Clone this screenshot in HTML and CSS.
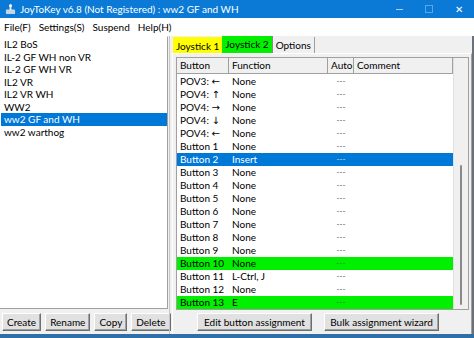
FILE: index.html
```html
<!DOCTYPE html>
<html lang="en">
<head>
  <meta charset="UTF-8" />
  <title>JoyToKey</title>
  <link rel="stylesheet" href="styles.css">
</head>
<body>
  <div class="window">
    <div class="titlebar">
      <svg class="appicon" width="11" height="11" viewBox="0 0 12 12">
        <rect x="1" y="6" width="10" height="5" rx="1" fill="#c8d4e0"/>
        <rect x="5" y="1" width="2" height="6" fill="#e8eef4"/>
        <circle cx="6" cy="2" r="1.6" fill="#fff"/>
      </svg>
      <span class="title">JoyToKey v6.8 (Not Registered) : ww2 GF and WH</span>
      <div class="controls">
        <span class="ctl"><i class="minbar"></i></span>
        <span class="ctl"><i class="maxbox"></i></span>
        <span class="ctl close">&#10005;</span>
      </div>
    </div>
    <div class="menubar">
      <span>File(F)</span>
      <span>Settings(S)</span>
      <span>Suspend</span>
      <span>Help(H)</span>
    </div>
    <div class="main">
      <div class="left">
        <ul class="profiles">
          <li>IL2 BoS</li>
          <li>IL-2 GF WH non VR</li>
          <li>IL-2 GF WH VR</li>
          <li>IL2 VR</li>
          <li>IL2 VR WH</li>
          <li>WW2</li>
          <li class="sel">ww2 GF and WH</li>
          <li>ww2 warthog</li>
        </ul>
        <div class="btnrow">
          <button>Create</button>
          <button>Rename</button>
          <button>Copy</button>
          <button>Delete</button>
        </div>
      </div>
      <div class="right">
        <div class="tabs">
          <span class="tab yellow">Joystick 1</span>
          <span class="tab green">Joystick 2</span>
          <span class="tab active">Options</span>
        </div>
        <div class="panel">
          <div class="listbox">
            <div class="listcol">
              <div class="row head">
                <span>Button</span><span>Function</span><span>Auto</span><span>Comment</span>
              </div>
              <div class="rows">
                <div class="row"><span>POV3: <b class="arr">&#8592;</b></span><span>None</span><span class="dash">---</span><span></span></div>
                <div class="row"><span>POV4: <b class="arr">&#8593;</b></span><span>None</span><span class="dash">---</span><span></span></div>
                <div class="row"><span>POV4: <b class="arr">&#8594;</b></span><span>None</span><span class="dash">---</span><span></span></div>
                <div class="row"><span>POV4: <b class="arr">&#8595;</b></span><span>None</span><span class="dash">---</span><span></span></div>
                <div class="row"><span>POV4: <b class="arr">&#8592;</b></span><span>None</span><span class="dash">---</span><span></span></div>
                <div class="row"><span>Button 1</span><span>None</span><span class="dash">---</span><span></span></div>
                <div class="row sel"><span>Button 2</span><span>Insert</span><span class="dash">---</span><span></span></div>
                <div class="row"><span>Button 3</span><span>None</span><span class="dash">---</span><span></span></div>
                <div class="row"><span>Button 4</span><span>None</span><span class="dash">---</span><span></span></div>
                <div class="row"><span>Button 5</span><span>None</span><span class="dash">---</span><span></span></div>
                <div class="row"><span>Button 6</span><span>None</span><span class="dash">---</span><span></span></div>
                <div class="row"><span>Button 7</span><span>None</span><span class="dash">---</span><span></span></div>
                <div class="row"><span>Button 8</span><span>None</span><span class="dash">---</span><span></span></div>
                <div class="row"><span>Button 9</span><span>None</span><span class="dash">---</span><span></span></div>
                <div class="row hit"><span>Button 10</span><span>None</span><span class="dash">---</span><span></span></div>
                <div class="row"><span>Button 11</span><span>L-Ctrl, J</span><span class="dash">---</span><span></span></div>
                <div class="row"><span>Button 12</span><span>None</span><span class="dash">---</span><span></span></div>
                <div class="row hit"><span>Button 13</span><span>E</span><span class="dash">---</span><span></span></div>
              </div>
            </div>
            <div class="scrollbar"><div class="thumb"></div></div>
          </div>
          <div class="actions">
            <button>Edit button assignment</button>
            <button>Bulk assignment wizard</button>
          </div>
        </div>
      </div>
      <div class="edge"></div>
    </div>
    <div class="frame-bottom"></div>
  </div>
</body>
</html>
```
FILE: styles.css
```css
html, body {
  margin: 0;
  padding: 0;
}
body {
  font-family: Lato, "Noto Sans", sans-serif;
  font-size: 10px;
  color: #000;
  background: #f0f0f0;
}
.window {
  width: 474px;
  height: 338px;
  display: flex;
  flex-direction: column;
  overflow: hidden;
}
.titlebar {
  height: 18px;
  background: #0a7ad6;
  color: #fff;
  display: flex;
  align-items: center;
  padding-left: 5px;
  gap: 4px;
}
.title {
  font-size: 10px;
  white-space: nowrap;
}
.controls {
  margin-left: auto;
  display: flex;
  align-items: center;
}
.ctl {
  width: 30px;
  display: flex;
  justify-content: center;
  align-items: center;
  color: #dbe9f7;
}
.minbar {
  display: block;
  width: 7px;
  height: 1px;
  background: #a9d0f0;
}
.maxbox {
  display: block;
  width: 6px;
  height: 6px;
  border: 1px solid #5ea6e3;
}
.close {
  color: #fff;
  font-size: 10px;
}
.menubar {
  height: 18px;
  background: #fff;
  display: flex;
  align-items: center;
  gap: 8px;
  padding-left: 4px;
}
.main {
  flex: 1;
  display: flex;
  min-height: 0;
}
.left {
  width: 168px;
  display: flex;
  flex-direction: column;
}
.profiles {
  flex: 1;
  list-style: none;
  margin: 0;
  padding: 1px 0 0 1px;
  background: #fff;
  border: 1px solid #a0a0a0;
  border-top-color: #fff;
  border-left: none;
}
.profiles li {
  height: 12.5px;
  line-height: 12.5px;
  padding-left: 3px;
  white-space: nowrap;
}
.profiles li.sel {
  background: #0078d7;
  color: #fff;
}
.btnrow {
  height: 25px;
  display: flex;
  align-items: center;
  gap: 4px;
  padding: 0 2px;
}
button {
  font-family: inherit;
  font-size: 10px;
  height: 18px;
  padding: 0 4px;
  background: #e1e1e1;
  border: 1px solid;
  border-color: #fff #6e6e6e #6e6e6e #fff;
  box-shadow: inset -1px -1px 0 #a0a0a0;
  color: #000;
  white-space: nowrap;
}
.btnrow button {
  flex: 1;
}
.right {
  flex: 1;
  display: flex;
  flex-direction: column;
  padding-left: 2px;
  border-left: 1px solid #c8c8c8;
  margin-left: 1px;
}
.tabs {
  display: flex;
  height: 17px;
  padding-left: 1px;
}
.tab {
  padding: 0 3px;
  line-height: 17px;
  border-right: 1px solid #a0a0a0;
}
.tab.yellow {
  background: #ffff00;
  padding: 1px 3px 0;
  margin-top: 1px;
  border-right: none;
}
.tab.green {
  background: #00f000;
  border-right: 1px solid #8a8a8a;
}
.tab.active {
  background: #f0f0f0;
  margin-top: 1px;
}
.panel {
  flex: 1;
  display: flex;
  flex-direction: column;
  border: 1px solid #fff;
  border-right-color: #a0a0a0;
  border-bottom: none;
  padding: 3px 2px 0 3px;
  min-height: 0;
}
.listbox {
  flex: 1;
  display: flex;
  border: 1px solid #a0a0a0;
  background: #f0f0f0;
  min-height: 0;
}
.listcol {
  width: 276px;
  display: flex;
  flex-direction: column;
  background: #fff;
}
.row {
  display: grid;
  grid-template-columns: 52px 99px 26px 1fr;
  height: 13px;
  line-height: 13px;
  white-space: nowrap;
}
.row span {
  padding-left: 3px;
  overflow: hidden;
}
.arr {
  font-family: "DejaVu Sans", sans-serif;
  font-weight: normal;
  font-size: 10px;
}
.row.head {
  height: 15px;
  line-height: 14px;
  background: #f0f0f0;
  border-bottom: 1px solid #a0a0a0;
  margin-bottom: 1px;
}
.row.head span {
  border-right: 1px solid #a0a0a0;
}
.dash {
  text-align: center;
  padding-left: 0 !important;
  color: #555;
  font-size: 8px;
}
.row.sel {
  background: #0078d7;
  color: #fff;
}
.row.sel .dash {
  color: #cfe3f5;
}
.row.hit {
  background: #00f000;
}
.row.hit .dash {
  color: #3a7a3a;
}
.rows {
  flex: 1;
  overflow: hidden;
}
.scrollbar {
  width: 14px;
  background: #f0f0f0;
  position: relative;
  border-left: 1px solid #e0e0e0;
}
.thumb {
  position: absolute;
  left: 6px;
  top: 107px;
  bottom: 4px;
  width: 2px;
  background: #8a8a8a;
  border-radius: 1px;
}
.actions {
  height: 24px;
  display: flex;
  align-items: center;
  gap: 12px;
  padding-left: 21px;
}
.actions button {
  width: 115px;
}
.edge {
  width: 5px;
  background: #f0f0f0;
  border-left: 2px solid #6c7078;
}
.frame-bottom {
  height: 4px;
  background: #2f6fa8;
}
```
